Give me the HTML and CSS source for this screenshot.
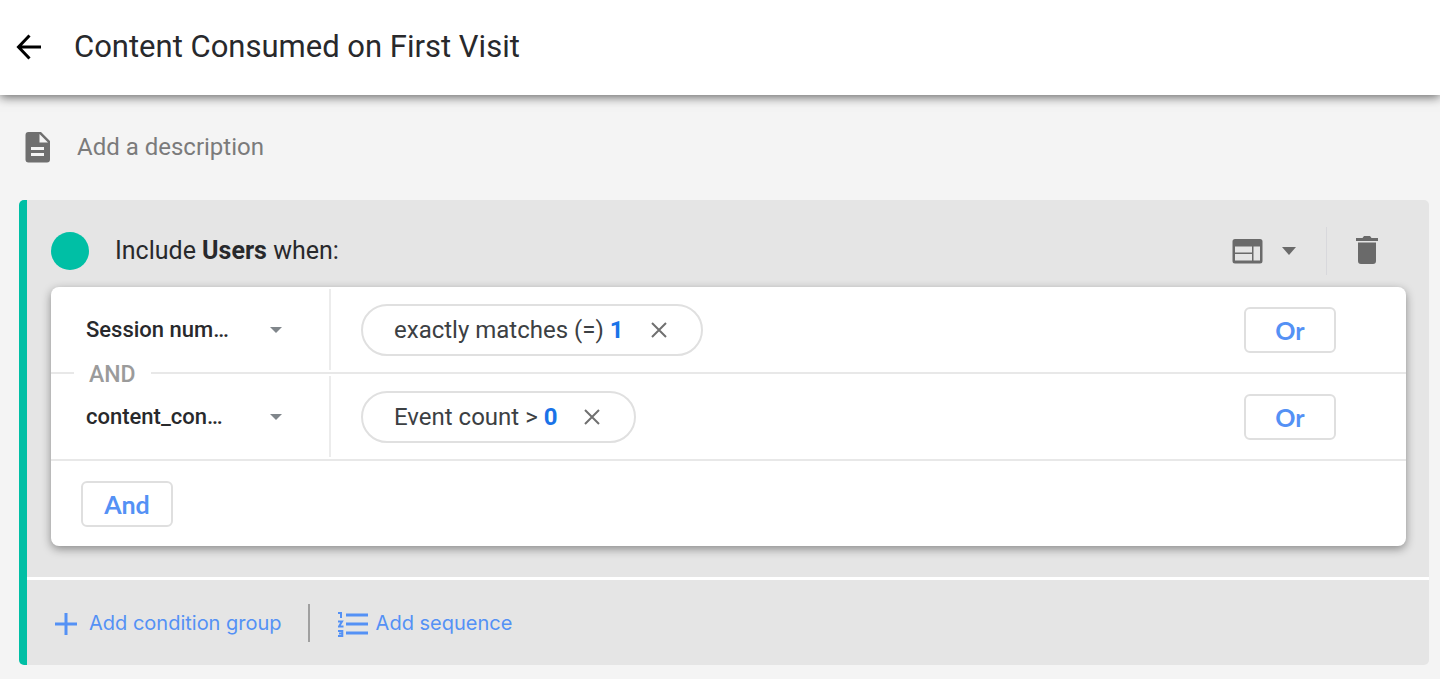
FILE: index.html
```
<!DOCTYPE html>
<html lang="en">
<head>
    <meta charset="UTF-8">
    <meta name="viewport" content="width=device-width, initial-scale=1.0">
    <title>Content Consumed on First Visit</title>
    <link rel="stylesheet" href="styles.css">
</head>
<body>
    <header class="topbar">
        <button type="button" class="icon-btn" aria-label="Back">
            <svg width="26" height="26" viewBox="0 0 26 26" fill="none" stroke="#000" stroke-width="3"><path d="M25 13H3M13.500 1.500L2.500 13l11 11.500"/></svg>
        </button>
        <h1>Content Consumed on First Visit</h1>
    </header>

    <main>
        <!-- Description -->
        <div class="description">
            <svg width="26" height="32" viewBox="0 0 26 32"><path fill="#6f6f6f" fill-rule="evenodd" d="M3.500 1H16l9 9v18.500a3 3 0 0 1-3 3H3.500a3 3 0 0 1-3-3V4a3 3 0 0 1 3-3zM14.500 3v8.500H23zM6 16v3h13V16zM6 22v3h13V22z"/></svg>
            <input type="text" placeholder="Add a description" aria-label="Description">
        </div>

        <section class="group">
            <div class="group-head">
                <span class="dot"></span>
                <h2>Include <strong>Users</strong> when:</h2>
                <button type="button" class="icon-btn scope" aria-label="Condition scope">
                    <svg width="32" height="26" viewBox="0 0 32 26"><path fill="#6a6a6a" fill-rule="evenodd" d="M4 1h25a2.500 2.500 0 0 1 2.500 2.500v19.500A2.500 2.500 0 0 1 29 25.500H4a2.500 2.500 0 0 1-2.500-2.500v-19.500A2.500 2.500 0 0 1 4 1zM4 8.500v6h17v-6zM4 16v6.500h17v-6.500zM22.500 8.500v14H29v-14z"/></svg>
                    <svg width="14" height="8" viewBox="0 0 14 8"><path fill="#6a6a6a" d="M0 0h14L7 8z"/></svg>
                </button>
                <button type="button" class="icon-btn remove" aria-label="Delete group">
                    <svg width="22" height="30" viewBox="0 0 22 30"><path fill="#6a6a6a" d="M0 2h6.500l1.500-2h6l1.500 2H22v3H0zM2 6.500h18V25a3 3 0 0 1-3 3H5a3 3 0 0 1-3-3z"/></svg>
                </button>
            </div>

            <!-- Conditions -->
            <div class="card">
                <div class="row">
                    <div class="field">
                        <select aria-label="First condition">
                            <option>Session num…</option>
                        </select>
                        <svg class="caret" width="12" height="6" viewBox="0 0 12 6"><path fill="#80868b" d="M0 0h12L6 6z"/></svg>
                    </div>
                    <div class="chip">
                        <span>exactly matches (=) <b>1</b></span>
                        <button type="button" class="icon-btn" aria-label="Remove filter">
                            <svg width="16" height="16" viewBox="0 0 16 16" stroke="#707070" stroke-width="2"><path d="M1 1l14 14M15 1L1 15"/></svg>
                        </button>
                    </div>
                    <button type="button" class="btn">Or</button>
                    <span class="join">AND</span>
                </div>
                <div class="row">
                    <div class="field">
                        <select aria-label="Second condition">
                            <option>content_con…</option>
                        </select>
                        <svg class="caret" width="12" height="6" viewBox="0 0 12 6"><path fill="#80868b" d="M0 0h12L6 6z"/></svg>
                    </div>
                    <div class="chip">
                        <span>Event count &gt; <b>0</b></span>
                        <button type="button" class="icon-btn" aria-label="Remove filter">
                            <svg width="16" height="16" viewBox="0 0 16 16" stroke="#707070" stroke-width="2"><path d="M1 1l14 14M15 1L1 15"/></svg>
                        </button>
                    </div>
                    <button type="button" class="btn">Or</button>
                </div>
                <div class="row last">
                    <button type="button" class="btn">And</button>
                </div>
            </div>

            <div class="group-foot">
                <button type="button" class="link-btn">
                    <svg width="22" height="24" viewBox="0 0 22 24" stroke="#5491f5" stroke-width="3"><path d="M11 2v22M0 13h22"/></svg>
                    Add condition group
                </button>
                <button type="button" class="link-btn sequence">
                    <svg width="30" height="28" viewBox="0 0 30 28" fill="none" stroke="#5491f5"><path stroke-width="3" d="M8 6h22M8 15h22M8 24h22"/><path stroke-width="2" d="M0 4h3V9M0 12.500h4L1 17.500h4.500M0 22h4.300v5H0M1 24.500h3"/></svg>
                    Add sequence
                </button>
            </div>
        </section>
    </main>
</body>
</html>
```
FILE: styles.css
```
* { box-sizing: border-box; }
body { font-family: Roboto, sans-serif; margin: 0; background-color: #f4f4f4; color: #28292c; }
h1, h2 { margin: 0; font-weight: 400; }
button, input, select { font: inherit; color: inherit; margin: 0; padding: 0; border: 0; background: none; }
button { cursor: pointer; }
svg { display: block; flex: none; }

.topbar { display: flex; align-items: center; gap: 32px; height: 95px; padding: 0 16px 2px; background-color: white; box-shadow: 0 2px 10px rgba(0, 0, 0, 0.6); }
.topbar h1 { font-size: 31px; line-height: 40px; }
.icon-btn { display: flex; align-items: center; }

.description { display: flex; align-items: center; gap: 26px; padding: 34px 25px 35px; }
.description input { flex: 1; font-size: 24px; line-height: 36px; height: 36px; outline: none; }
.description input::placeholder { color: #7b7b7b; opacity: 1; }

.group { margin: 0 11px 14px 19px; border-left: 8px solid #00bfa5; border-radius: 5px; background-color: #e5e5e5; }
.group-head { display: flex; align-items: center; padding: 27px 51px 12px 24px; }
.dot { width: 38px; height: 38px; margin-right: 26px; border-radius: 50%; background-color: #00bfa5; }
.group-head h2 { flex: 1; font-size: 25px; line-height: 48px; }
.group-head strong { font-weight: 700; }
.scope { gap: 19px; padding-right: 30px; height: 48px; }
.remove { padding-left: 29px; height: 48px; border-left: 1px solid #d8d8dc; }

.card { margin: 0 23px 0 24px; border-radius: 8px; background-color: white; box-shadow: 0 3px 10px rgba(0, 0, 0, 0.4); }
.row { position: relative; display: flex; align-items: center; height: 87px; padding-right: 70px; border-bottom: 2px solid #e8e8e8; }
.field { position: relative; display: flex; align-items: center; align-self: stretch; width: 280px; margin: 2px 0; padding: 0 35px; border-right: 2px solid #ececec; }
.field select { width: 100%; appearance: none; font-size: 22px; font-weight: 500; line-height: 32px; cursor: pointer; }
.caret { position: absolute; right: 47px; pointer-events: none; }
.chip { display: flex; align-items: center; gap: 27px; height: 52px; margin: 0 auto 0 30px; padding: 0 34px 0 31px; border: 2px solid #e0e0e0; border-radius: 26px; color: #3c4043; font-size: 24px; white-space: nowrap; }
.chip b { color: #1a73e8; font-weight: 700; }
.btn { width: 92px; height: 46px; border: 2px solid #dfdfdf; border-radius: 6px; color: #5491f5; font-family: Lato, sans-serif; font-size: 25px; font-weight: 700; }
.join { position: absolute; left: 23px; bottom: -17px; padding: 0 15px; background-color: white; color: #9b9b9b; font-size: 23px; font-weight: 500; line-height: 28px; }
.last { height: 85px; padding-left: 30px; border-bottom: 0; }

.group-foot { display: flex; align-items: center; margin-top: 31px; padding: 24px 28px 23px; border-top: 3px solid white; }
.link-btn { display: flex; align-items: center; gap: 12px; height: 38px; color: #5491f5; font-family: Inter, sans-serif; font-size: 20px; }
.sequence { gap: 8px; margin-left: 26px; padding-left: 28px; border-left: 2px solid #a0a0a0; }
```
